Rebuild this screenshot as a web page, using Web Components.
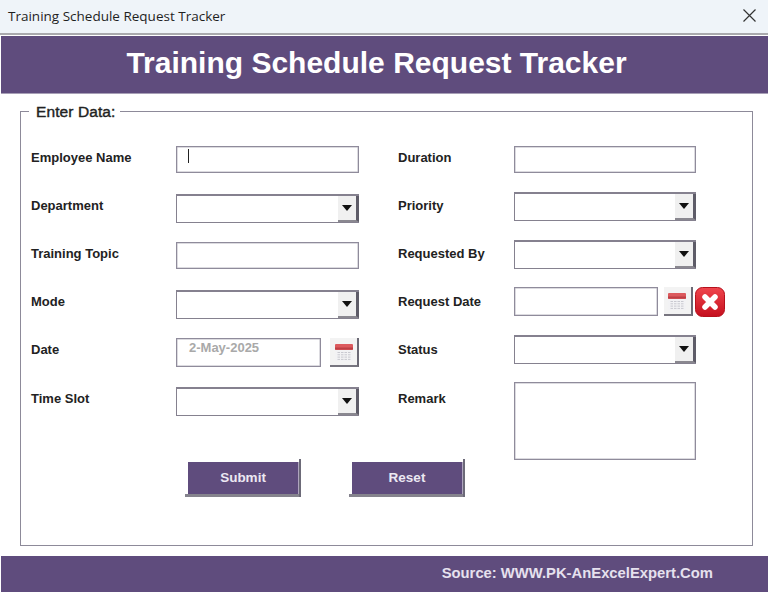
<!DOCTYPE html>
<html>
<head>
<meta charset="utf-8">
<title>Training Schedule Request Tracker</title>
<style>
  html, body { margin: 0; height: 100%; background: #fff; }
  body { font-family: "Liberation Sans", Arial, sans-serif; overflow: hidden; }
</style>
</head>
<body>
<tracker-app></tracker-app>

<script>
// little helper so each class stays short
function shadow(el, html) {
    el.attachShadow({ mode: 'open' });
    el.shadowRoot.innerHTML = html;
}

const CALENDAR = `
<svg width="20" height="20" viewBox="0 0 20 20">
    <rect x="1" y="2" width="18" height="17" rx="1" fill="#f2f2f4"/>
    <rect x="1" y="2" width="18" height="6" rx="1" fill="#dc5a5e"/>
    <rect x="1" y="5.5" width="18" height="2" fill="#bd3f45"/>
    <g fill="#c9c9d0">
        <rect x="3.5" y="10" width="13" height="1"/>
        <rect x="3.5" y="12.3" width="13" height="1"/>
        <rect x="3.5" y="14.6" width="13" height="1"/>
        <rect x="3.5" y="16.9" width="13" height="1"/>
    </g>
    <g fill="#f2f2f4">
        <rect x="6" y="10" width="1" height="8"/>
        <rect x="9.5" y="10" width="1" height="8"/>
        <rect x="13" y="10" width="1" height="8"/>
    </g>
</svg>`;

class TitleBar extends HTMLElement {
    constructor() {
        super();
        shadow(this, `
            <style>
                :host {
                    display: flex;
                    align-items: center;
                    justify-content: space-between;
                    height: 31px;
                    padding: 0 12px 2px 8px;
                    background: #eff4f9;
                    border-bottom: 2px solid #a9a9ad;
                    font: 13.5px "Open Sans", "Liberation Sans", sans-serif;
                    color: #1f1f1f;
                }
                svg { display: block; }
            </style>
            <slot></slot>
            <svg width="13" height="13" viewBox="0 0 13 13">
                <path d="M.5 .5 12.5 12.5M12.5 .5 .5 12.5" stroke="#333" stroke-width="1.2" fill="none"/>
            </svg>`);
    }
}

class PurpleBand extends HTMLElement {
    constructor() {
        super();
        shadow(this, `
            <style>
                :host {
                    display: flex;
                    align-items: center;
                    box-sizing: border-box;
                    background: #5f4c7d;
                    color: #fff;
                    font-weight: bold;
                    margin-left: 1px;
                }
                :host([kind="banner"]) {
                    justify-content: center;
                    height: 58px;
                    margin-top: 1px;
                    font-size: 30px;
                    border-bottom: 1px solid #a79fb6;
                    padding: 0 16px 4px 0;
                }
                :host([kind="footer"]) {
                    justify-content: flex-end;
                    height: 36px;
                    padding: 0 55px 3px 0;
                    font-size: 14.8px;
                    color: #e6e1ee;
                }
            </style>
            <slot></slot>`);
    }
}

class DataPanel extends HTMLElement {
    constructor() {
        super();
        shadow(this, `
            <style>
                :host {
                    display: flex;
                    flex: 1;
                    padding: 9px 15px 10px 20px;
                    min-height: 0;
                }
                fieldset {
                    flex: 1;
                    margin: 0;
                    padding: 16px 0 0 10px;
                    border: 1px solid #8d8a99;
                    min-width: 0;
                }
                legend {
                    margin-left: -2px;
                    padding: 0 4px 0 7px;
                    font-size: 15.5px;
                    letter-spacing: .1px;
                    -webkit-text-stroke: .4px #222;
                    color: #222;
                    line-height: 17px;
                }
            </style>
            <fieldset>
                <legend>${this.getAttribute('legend')}</legend>
                <slot></slot>
            </fieldset>`);
    }
}

class FormField extends HTMLElement {
    constructor() {
        super();
        shadow(this, `
            <style>
                :host {
                    display: grid;
                    grid-template-columns: var(--label-width) 1fr;
                    grid-template-rows: 48.2px;
                    height: 48.2px;
                    font-size: 13px;
                    font-weight: bold;
                    color: #222;
                }
                span { align-self: center; padding-bottom: 6px; }
                div {
                    align-self: var(--align, center);
                    margin-bottom: var(--raise, 0);
                    display: flex;
                    align-items: center;
                }
            </style>
            <span>${this.getAttribute('label')}</span>
            <div><slot></slot></div>`);
    }
}

class TextBox extends HTMLElement {
    constructor() {
        super();
        shadow(this, `
            <style>
                :host {
                    display: block;
                    box-sizing: border-box;
                    position: relative;
                    width: var(--w, 183px);
                    height: var(--h, 27px);
                    background: #fff;
                    border: 1px solid #8f8b9b;
                    box-shadow: inset 0 0 0 .5px #b9b7c2;
                    font-size: 13px;
                    font-weight: bold;
                    color: #a9a9a9;
                    padding: 1px 0 0 12px;
                }
                :host([caret])::after {
                    content: "";
                    position: absolute;
                    left: 11px;
                    top: 2px;
                    width: 1px;
                    height: 14px;
                    background: #222;
                }
            </style>
            <slot></slot>`);
    }
}

class ComboBox extends HTMLElement {
    constructor() {
        super();
        shadow(this, `
            <style>
                :host {
                    display: flex;
                    justify-content: flex-end;
                    box-sizing: border-box;
                    width: var(--w, 183px);
                    height: 29px;
                    background: #fff;
                    border: 1px solid #85818f;
                    border-top-width: 2px;
                    border-right: 0;
                }
                i {
                    display: flex;
                    align-items: center;
                    justify-content: center;
                    width: 18px;
                    background: #f0f0f0;
                    border-right: 3px solid #5e5c68;
                    border-bottom: 2px solid #8a8890;
                }
                svg { display: block; }
            </style>
            <i><svg width="10" height="6" viewBox="0 0 10 6"><path d="M0 0H10L5 6Z" fill="#111"/></svg></i>`);
    }
}

class CalendarButton extends HTMLElement {
    constructor() {
        super();
        shadow(this, `
            <style>
                :host {
                    display: flex;
                    align-items: center;
                    justify-content: center;
                    box-sizing: border-box;
                    width: 29px;
                    height: 29px;
                    margin-left: var(--gap, 9px);
                    background: #f3f3f3;
                    border-right: 2px solid #6b6975;
                    border-bottom: 2px solid #77757f;
                }
            </style>
            ${CALENDAR}`);
    }
}

class ClearButton extends HTMLElement {
    constructor() {
        super();
        shadow(this, `
            <style>
                :host { display: block; margin-left: 2px; height: 30px; }
                svg { display: block; }
            </style>
            <svg width="30" height="30" viewBox="0 0 30 30">
                <defs>
                    <linearGradient id="red" x1="0" y1="0" x2="0" y2="1">
                        <stop offset="0" stop-color="#f0454d"/>
                        <stop offset="1" stop-color="#c50f1e"/>
                    </linearGradient>
                </defs>
                <rect x=".5" y=".5" width="29" height="29" rx="7" fill="url(#red)" stroke="#b5101c"/>
                <path d="M10 10 20 20M20 10 10 20" stroke="#fff" stroke-width="5.5" stroke-linecap="round"/>
            </svg>`);
    }
}

class ActionButton extends HTMLElement {
    constructor() {
        super();
        shadow(this, `
            <style>
                :host {
                    display: flex;
                    flex: none;
                    align-items: center;
                    justify-content: center;
                    box-sizing: border-box;
                    width: 116px;
                    height: 38px;
                    color: #ece8f2;
                    font-size: 13.5px;
                    font-weight: bold;
                    /* raised edge runs past the face on the right and at the bottom */
                    background:
                        linear-gradient(#6c6a78, #6c6a78) right / 2.5px 100% no-repeat,
                        linear-gradient(#85838d, #85838d) bottom / 100% 3px no-repeat,
                        linear-gradient(#5f4c7d, #5f4c7d) 3px 3px / calc(100% - 5.5px) calc(100% - 6px) no-repeat;
                }
            </style>
            <slot></slot>`);
    }
}

class TrackerForm extends HTMLElement {
    constructor() {
        super();
        shadow(this, `
            <style>
                :host {
                    display: grid;
                    grid-template-columns: 367px 1fr;
                }
                .left { --label-width: 145px; }
                .right { --label-width: 115.5px; --w: 182px; }
                .actions {
                    display: flex;
                    gap: 48px;
                    margin: 33.8px 0 0 154px;
                }
            </style>
            <div class="left">
                <form-field label="Employee Name" style="--raise:2px"><text-box caret></text-box></form-field>
                <form-field label="Department"><combo-box></combo-box></form-field>
                <form-field label="Training Topic" style="--raise:2px"><text-box></text-box></form-field>
                <form-field label="Mode"><combo-box></combo-box></form-field>
                <form-field label="Date"><text-box style="--w:145px;--h:29px">2-May-2025</text-box><calendar-button></calendar-button></form-field>
                <form-field label="Time Slot"><combo-box></combo-box></form-field>
                <div class="actions">
                    <action-button>Submit</action-button>
                    <action-button>Reset</action-button>
                </div>
            </div>
            <div class="right">
                <form-field label="Duration" style="--raise:2px"><text-box></text-box></form-field>
                <form-field label="Priority" style="--raise:4px"><combo-box></combo-box></form-field>
                <form-field label="Requested By" style="--raise:4px"><combo-box></combo-box></form-field>
                <form-field label="Request Date" style="--raise:6px;--gap:6px"><text-box style="--w:144px;--h:29px"></text-box><calendar-button></calendar-button><clear-button></clear-button></form-field>
                <form-field label="Status" style="--raise:6px"><combo-box></combo-box></form-field>
                <form-field label="Remark" style="--align:start"><text-box style="--h:78px;margin-top:5px"></text-box></form-field>
            </div>`);
    }
}

class TrackerApp extends HTMLElement {
    constructor() {
        super();
        shadow(this, `
            <style>
                :host {
                    display: flex;
                    flex-direction: column;
                    height: 592px;
                    width: 768px;
                    background: #fff;
                }
            </style>
            <title-bar>Training Schedule Request Tracker</title-bar>
            <purple-band kind="banner">Training Schedule Request Tracker</purple-band>
            <data-panel legend="Enter Data:"><tracker-form></tracker-form></data-panel>
            <purple-band kind="footer">Source: WWW.PK-AnExcelExpert.Com</purple-band>`);
    }
}

customElements.define('title-bar', TitleBar);
customElements.define('purple-band', PurpleBand);
customElements.define('data-panel', DataPanel);
customElements.define('form-field', FormField);
customElements.define('text-box', TextBox);
customElements.define('combo-box', ComboBox);
customElements.define('calendar-button', CalendarButton);
customElements.define('clear-button', ClearButton);
customElements.define('action-button', ActionButton);
customElements.define('tracker-form', TrackerForm);
customElements.define('tracker-app', TrackerApp);
</script>
</body>
</html>
